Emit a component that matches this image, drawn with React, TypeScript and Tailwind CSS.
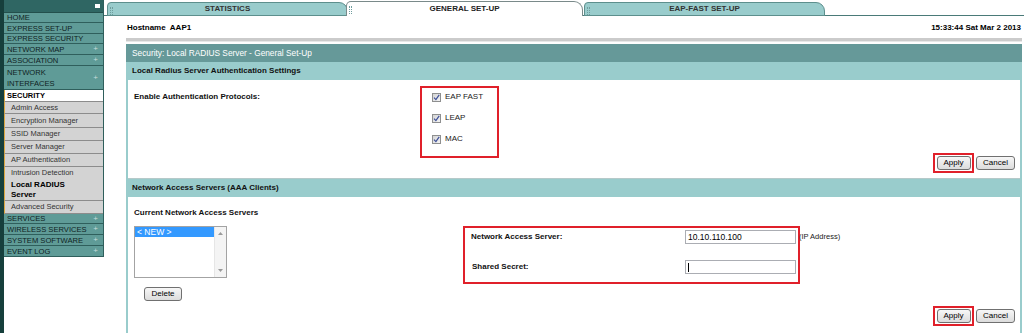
import React from "react";

function TealItem({ label, plus, h, lines }: { label: React.ReactNode; plus?: boolean; h: string; lines?: boolean }) {
  return (
    <div className={`${h} flex items-center justify-between bg-[#5f9b97] border-b border-[#2f5f5c] pl-[3px] pr-[5px] text-[7.6px] leading-[11px] text-[#0f1f1f] uppercase`}>
      <span className={lines ? "w-[60px]" : ""}>{label}</span>
      {plus && <span className="text-[#c6dcda] text-[8px] leading-none">+</span>}
    </div>
  );
}

function SubItem({ label, h, bold, noBorder }: { label: React.ReactNode; h: string; bold?: boolean; noBorder?: boolean }) {
  return (
    <div
      className={`${h} flex items-center bg-[#d3d3d3] border-l border-l-[#d9a640] ${noBorder ? "" : "border-b border-b-[#8c8c8c]"} pl-[6px] ${
        bold ? "text-[8px] font-bold text-black leading-[10px]" : "text-[7.5px] text-[#333] leading-[10px]"
      }`}
    >
      <span>{label}</span>
    </div>
  );
}

function Sidebar() {
  return (
    <div className="w-[104px] h-[333px] flex shrink-0">
      <div className="w-[4px] h-full bg-[#163f3c]" />
      <div className="w-[99px] flex flex-col">
        <div className="h-[13px] bg-[#2f6663] flex items-start justify-end pr-[3px] pt-[4px] border-b border-[#234f4c]">
          <div className="w-[5px] h-[4px] bg-white" />
        </div>
        <TealItem label="Home" h="h-[10px]" />
        <TealItem label="Express Set-Up" h="h-[11px]" />
        <TealItem label="Express Security" h="h-[10px]" />
        <TealItem label="Network Map" plus h="h-[11px]" />
        <TealItem label="Association" plus h="h-[11px]" />
        <TealItem label={<>Network<br />Interfaces</>} plus lines h="h-[24px]" />
        <div className="h-[12px] flex items-center bg-white border-l border-l-[#d9a640] border-b border-b-[#8c8c8c] pl-[2px] text-[7.5px] font-bold text-black">
          SECURITY
        </div>
        <SubItem label="Admin Access" h="h-[12px]" />
        <SubItem label="Encryption Manager" h="h-[14px]" />
        <SubItem label="SSID Manager" h="h-[13px]" />
        <SubItem label="Server Manager" h="h-[13px]" />
        <SubItem label="AP Authentication" h="h-[13px]" />
        <SubItem label="Intrusion Detection" h="h-[12px]" noBorder />
        <SubItem label={<>Local RADIUS<br />Server</>} h="h-[22px]" bold />
        <SubItem label="Advanced Security" h="h-[13px]" />
        <TealItem label="Services" plus h="h-[10px]" />
        <TealItem label="Wireless Services" plus h="h-[11px]" />
        <TealItem label="System Software" plus h="h-[11px]" />
        <TealItem label="Event Log" plus h="h-[11px]" />
        <div className="flex-1 bg-white" />
      </div>
      <div className="w-[1px] h-[257px] bg-[#2f5f5c]" />
    </div>
  );
}

function Grip() {
  return <div className="absolute left-[2px] top-[4px] w-[3px] h-[8px] border-x border-dotted border-[#6f9e9e]" />;
}

function Tabs() {
  return (
    <div className="h-[16px] pt-[2px] flex items-end border-b border-[#4a7a78] pl-[3px]">
      <div className="relative w-[241px] h-[14px] -mb-[1px] bg-[#99cccc] border border-[#5d8f8d] rounded-tl-[4px] rounded-tr-[9px] flex items-center justify-center text-[8px] font-bold text-[#333]">
        <Grip />
        STATISTICS
      </div>
      <div className="relative w-[237px] h-[15px] -mb-[1px] -ml-[2px] bg-white border border-b-0 border-[#7a8a8a] rounded-tl-[5px] rounded-tr-[9px] flex items-center justify-center text-[8px] font-bold text-[#222]">
        <Grip />
        GENERAL SET-UP
      </div>
      <div className="relative w-[241px] h-[14px] -mb-[1px] ml-[1px] bg-[#99cccc] border border-[#5d8f8d] rounded-tl-[4px] rounded-tr-[9px] flex items-center justify-center text-[8px] font-bold text-[#333]">
        <Grip />
        EAP-FAST SET-UP
      </div>
    </div>
  );
}

function Check() {
  return (
    <span className="w-[9px] h-[9px] border border-[#8e8f8f] bg-linear-to-br from-[#d4d4d4] to-[#f4f4f4] flex items-center justify-center">
      <svg width="7" height="7" viewBox="0 0 7 7">
        <path d="M1 3.6 L2.9 5.6 L6.2 0.8" stroke="#3d4f98" strokeWidth="1.2" fill="none" />
      </svg>
    </span>
  );
}

function Btn({ label, w }: { label: string; w: string }) {
  return (
    <div className={`${w} h-[14px] rounded-[3px] border border-[#707070] bg-linear-to-b from-[#f7f7f7] to-[#dcdcdc] flex items-center justify-center text-[8px] text-black`}>
      {label}
    </div>
  );
}

function ApplyRow({ className }: { className: string }) {
  return (
    <div className={`flex items-center justify-end pr-[5px] ${className}`}>
      <div className="w-[41px] h-[20px] border-2 border-[#e0202a] flex items-center justify-center">
        <Btn label="Apply" w="w-[34px]" />
      </div>
      <div className="ml-[2px]">
        <Btn label="Cancel" w="w-[39px]" />
      </div>
    </div>
  );
}

function Input({ value, caret }: { value?: string; caret?: boolean }) {
  return (
    <div className="w-[111px] h-[14px] border border-[#abadb3] bg-white flex items-center pl-[2px] text-[8.5px] text-black shrink-0">
      {value}
      {caret && <div className="w-[1px] h-[9px] bg-black" />}
    </div>
  );
}

function ScrollArrow({ up }: { up?: boolean }) {
  return (
    <svg width="5" height="3" viewBox="0 0 5 3">
      <path d={up ? "M0 3 L2.5 0 L5 3 Z" : "M0 0 L2.5 3 L5 0 Z"} fill="#9a9a9a" />
    </svg>
  );
}

function Main() {
  return (
    <div className="flex-1 flex flex-col">
      <Tabs />
      <div className="pl-[22px] pr-[2px] flex flex-col">
        <div className="h-[21px] flex items-center justify-between pt-[3px] pl-[1px] pr-[1px] text-[8px] font-bold text-black">
          <span>Hostname&nbsp; AAP1</span>
          <span>15:33:44 Sat Mar 2 2013</span>
        </div>
        <div className="h-[3px] bg-[#cbcbcb] mt-[1px]" />
        <div className="h-[3px] border-t border-[#e8e8e8]" />
        <div className="h-[18px] bg-[#669999] flex items-center pl-[6px] text-[8.3px] text-white">
          Security: Local RADIUS Server - General Set-Up
        </div>
        <div className="border-x-2 border-[#99cccc] flex flex-col">
          <div className="h-[18px] bg-[#99cccc] flex items-center pl-[4px] text-[8px] font-bold text-[#111]">
            Local Radius Server Authentication Settings
          </div>
          <div className="h-[98px] bg-white flex flex-col">
            <div className="flex items-start pt-[6px] pl-[6px]">
              <div className="w-[286px] mt-[5px] text-[8px] font-bold text-[#111]">Enable Authentication Protocols:</div>
              <div className="w-[79px] h-[72px] border-2 border-[#e0202a] flex flex-col gap-[9px] pt-[3px] pl-[10px]">
                {["EAP FAST", "LEAP", "MAC"].map((l) => (
                  <div key={l} className="h-[12px] flex items-center gap-[4px] text-[8px] text-[#222]">
                    <Check />
                    <span>{l}</span>
                  </div>
                ))}
              </div>
            </div>
            <ApplyRow className="-mt-[5px]" />
          </div>
          <div className="h-[19px] bg-[#99cccc] border-t border-[#b5c9c9] flex items-center pl-[4px] text-[8px] font-bold text-[#111]">
            Network Access Servers (AAA Clients)
          </div>
          <div className="h-[136px] bg-white flex flex-col">
            <div className="pt-[10px] pl-[6px] h-[29px] text-[8px] font-bold text-[#111]">Current Network Access Servers</div>
            <div className="flex items-start pl-[6px]">
              <div className="w-[329px] flex flex-col shrink-0">
                <div className="w-[93px] h-[52px] border border-[#a3a3a3] bg-white flex">
                  <div className="flex-1">
                    <div className="h-[10px] bg-[#3399ff] text-white text-[8.5px] leading-[10px] pl-[2px]">&lt; NEW &gt;</div>
                  </div>
                  <div className="w-[12px] bg-[#f4f4f4] border-l border-[#e6e6e6] flex flex-col items-center justify-between py-[5px]">
                    <ScrollArrow up />
                    <ScrollArrow />
                  </div>
                </div>
                <div className="ml-[10px] mt-[9px]">
                  <Btn label="Delete" w="w-[38px]" />
                </div>
              </div>
              <div className="w-[337px] h-[58px] border-2 border-[#e0202a] pt-[2px] pl-[6px] flex flex-col gap-[16px] shrink-0">
                <div className="h-[14px] flex items-center">
                  <span className="w-[214px] shrink-0 text-[8px] font-bold text-[#111]">Network Access Server:</span>
                  <Input value="10.10.110.100" />
                  <span className="ml-[3px] shrink-0 whitespace-nowrap text-[7.5px] text-[#222]">(IP Address)</span>
                </div>
                <div className="h-[14px] flex items-center">
                  <span className="w-[214px] shrink-0 pl-[1px] text-[8px] font-bold text-[#111]">Shared Secret:</span>
                  <Input caret />
                </div>
              </div>
            </div>
            <ApplyRow className="mt-[5px]" />
          </div>
        </div>
      </div>
    </div>
  );
}

export default function App() {
  return (
    <div className="w-[1024px] h-[333px] flex bg-white overflow-hidden font-['Liberation_Sans',Arial,sans-serif]">
      <Sidebar />
      <Main />
    </div>
  );
}
